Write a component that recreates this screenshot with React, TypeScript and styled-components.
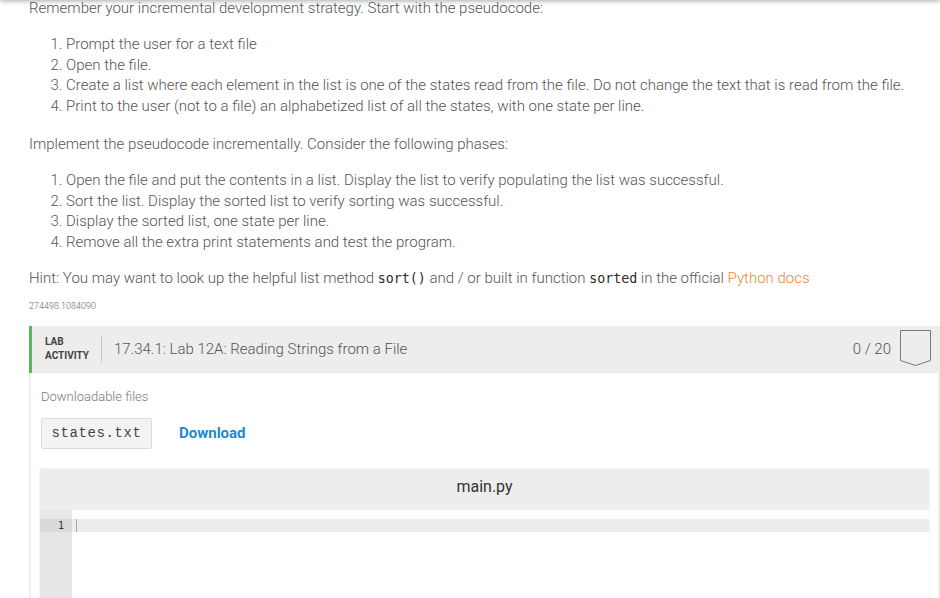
import React from "react";
import styled, { createGlobalStyle } from "styled-components";

const Global = createGlobalStyle`
  html, body { margin: 0; padding: 0; background: #fff; overflow: hidden; }
  body { font-family: Roboto, "Noto Sans", "Liberation Sans", sans-serif; }
`;

const TopShadow = styled.div`
  position: fixed;
  top: -6px;
  left: 0;
  right: 0;
  height: 6px;
  box-shadow: 0 1px 5px rgba(0, 0, 0, 0.35);
  background: #fff;
  z-index: 5;
`;

const Page = styled.div`
  padding: 0 0 0 29px;
  color: #555;
  font-family: Roboto, "Noto Sans", sans-serif;
  font-weight: 300;
  font-size: 15px;
  line-height: 20.7px;
`;

const Para = styled.p<{ $first?: boolean }>`
  margin: ${(p) => (p.$first ? "-2.4px" : "0")} 0 15.5px 0;
`;

const List = styled.ol<{ $gap?: number }>`
  margin: 0 0 ${(p) => p.$gap ?? 15.5}px 0;
  padding-left: 37px;
`;

const Code = styled.code`
  font-family: "DejaVu Sans Mono", "Liberation Mono", monospace;
  font-size: 13.3px;
  font-weight: 400;
  color: #2a2a2a;
`;

const DocLink = styled.a`
  color: #f5862c;
  text-decoration: none;
`;

const RefId = styled.div`
  font-size: 9px;
  line-height: 12px;
  color: #666;
  margin: -5px 0 13.5px 0;
`;

const Lab = styled.section`
  border-left: 2px solid #eeeeee;
  border-right: 2px solid #eeeeee;
  min-height: 400px;
`;

const LabHeader = styled.header`
  display: flex;
  align-items: center;
  height: 47px;
  margin-left: -2px;
  margin-right: -2px;
  background: #ededed;
  border-left: 3px solid #5cb85c;
  padding: 0 9px 0 13px;
`;

const LabLabel = styled.div`
  font-family: Roboto, "Liberation Sans", sans-serif;
  font-weight: 700;
  font-size: 10px;
  line-height: 14px;
  color: #444;
  text-transform: uppercase;
  padding-right: 12px;
  border-right: 1px solid #c8c8c8;
  margin-right: 12px;
`;

const LabTitle = styled.h2`
  margin: 0;
  flex: 1;
  font-weight: 300;
  font-size: 15px;
  color: #555;
`;

const Score = styled.span`
  font-size: 15px;
  font-weight: 300;
  color: #555;
  margin-right: 9px;
`;

const Badge = styled.svg`
  display: block;
  width: 31px;
  height: 37px;
  margin-top: -2px;
`;

const LabBody = styled.div`
  padding: 15px 9px 0 9px;
`;

const FilesLabel = styled.div`
  font-size: 13px;
  line-height: 18px;
  color: #777;
  font-weight: 300;
  padding-left: 1px;
`;

const FileRow = styled.div`
  display: flex;
  align-items: center;
  gap: 27px;
  margin: 12px 0 20px 1px;
`;

const FileBox = styled.div`
  box-sizing: border-box;
  width: 111px;
  height: 31px;
  display: flex;
  align-items: center;
  justify-content: center;
  background: #f3f3f3;
  border: 1px solid #dcdcdc;
  border-radius: 2px;
  font-family: "Liberation Mono", "Courier New", monospace;
  font-size: 14px;
  letter-spacing: 0.6px;
  color: #444;
`;

const DownloadLink = styled.a`
  font-family: Roboto, "Liberation Sans", sans-serif;
  font-weight: 700;
  font-size: 15px;
  color: #1a8ad4;
  text-decoration: none;
`;

const Editor = styled.div`
  box-shadow: 0 0 2px rgba(0, 0, 0, 0.12);
  background: #fff;
  min-height: 200px;
`;

const EditorHeader = styled.div`
  height: 41px;
  background: #ededed;
  display: flex;
  align-items: center;
  justify-content: center;
  font-family: Roboto, "Liberation Sans", sans-serif;
  font-weight: 400;
  font-size: 16px;
  color: #333;
  padding-bottom: 4px;
  box-sizing: border-box;
`;

const EditorBody = styled.div`
  display: grid;
  grid-template-columns: 32px 1fr;
  min-height: 200px;
`;

const Gutter = styled.div`
  background: #e7e7e7;
  padding-top: 9px;
`;

const CodeArea = styled.div`
  padding-top: 9px;
`;

const LineNo = styled.div<{ $active?: boolean }>`
  height: 13px;
  line-height: 13px;
  background: ${(p) => (p.$active ? "#dadada" : "transparent")};
  font-family: "DejaVu Sans Mono", monospace;
  font-size: 10px;
  color: #333;
  text-align: right;
  padding-right: 8px;
`;

const CodeLine = styled.div<{ $active?: boolean }>`
  height: 13px;
  background: ${(p) => (p.$active ? "#ececec" : "transparent")};
  display: flex;
  align-items: center;
  padding-left: 4px;
`;

const Cursor = styled.span`
  display: block;
  width: 1px;
  height: 13px;
  background: #aaa;
`;

export default function App() {
  return (
    <>
      <Global />
      <TopShadow />
      <Page>
        <Para $first>Remember your incremental development strategy. Start with the pseudocode:</Para>
        <List $gap={17}>
          <li>Prompt the user for a text file</li>
          <li>Open the file.</li>
          <li>
            Create a list where each element in the list is one of the states read from the file. Do not change the
            text that is read from the file.
          </li>
          <li>Print to the user (not to a file) an alphabetized list of all the states, with one state per line.</li>
        </List>
        <Para>Implement the pseudocode incrementally. Consider the following phases:</Para>
        <List>
          <li>Open the file and put the contents in a list. Display the list to verify populating the list was successful.</li>
          <li>Sort the list. Display the sorted list to verify sorting was successful.</li>
          <li>Display the sorted list, one state per line.</li>
          <li>Remove all the extra print statements and test the program.</li>
        </List>
        <Para>
          Hint: You may want to look up the helpful list method <Code>sort()</Code> and / or built in function{" "}
          <Code>sorted</Code> in the official <DocLink href="#">Python docs</DocLink>
        </Para>
        <RefId>274498.1084090</RefId>
        <Lab>
          <LabHeader>
            <LabLabel>
              Lab
              <br />
              Activity
            </LabLabel>
            <LabTitle>17.34.1: Lab 12A: Reading Strings from a File</LabTitle>
            <Score>0 / 20</Score>
            <Badge viewBox="0 0 31 37">
              <path d="M0.5 0.5 H30.5 V30.5 L15.5 35.5 L0.5 30.5 Z" fill="none" stroke="#777" strokeWidth="1" />
            </Badge>
          </LabHeader>
          <LabBody>
            <FilesLabel>Downloadable files</FilesLabel>
            <FileRow>
              <FileBox>states.txt</FileBox>
              <DownloadLink href="#">Download</DownloadLink>
            </FileRow>
            <Editor>
              <EditorHeader>main.py</EditorHeader>
              <EditorBody>
                <Gutter>
                  <LineNo $active>1</LineNo>
                </Gutter>
                <CodeArea>
                  <CodeLine $active>
                    <Cursor />
                  </CodeLine>
                </CodeArea>
              </EditorBody>
            </Editor>
          </LabBody>
        </Lab>
      </Page>
    </>
  );
}
